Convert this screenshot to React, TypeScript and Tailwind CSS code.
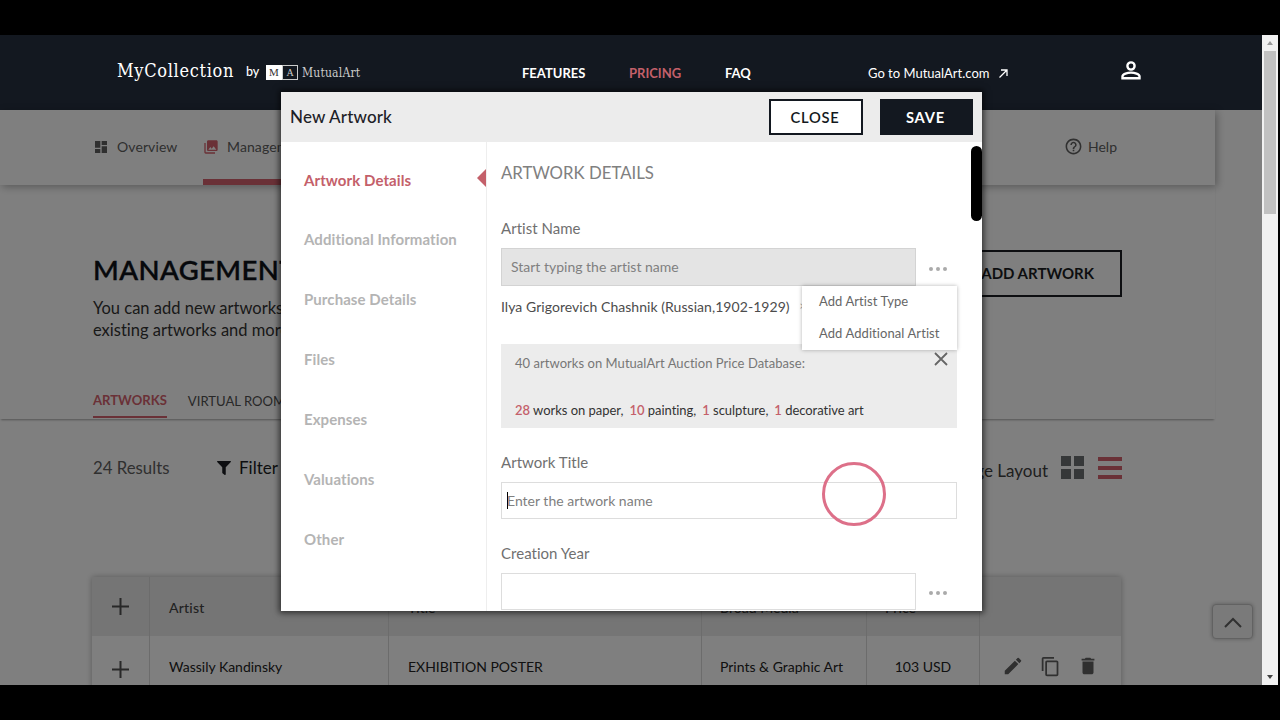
import { ReactNode } from "react";
import { FaFilter } from "react-icons/fa";
import {
  MdContentCopy,
  MdDashboard,
  MdDelete,
  MdEdit,
  MdHelpOutline,
  MdPhotoLibrary,
} from "react-icons/md";

const sections = [
  "Artwork Details",
  "Additional Information",
  "Purchase Details",
  "Files",
  "Expenses",
  "Valuations",
  "Other",
];

function Header() {
  return (
    <header className="flex h-[75px] shrink-0 items-center bg-[#131820] text-white">
      <div className="ml-[117px] flex w-[405px] items-center">
        <span className="w-[129px] whitespace-nowrap pb-1 font-['DejaVu_Serif_Condensed','DejaVu_Serif',serif] text-[18px] leading-6 tracking-[0.7px]">
          MyCollection
        </span>
        <span className="w-[20px] pb-0.5 text-[12.5px] font-medium leading-4">by</span>
        <span className="flex h-[15px] w-4 items-center justify-center bg-white font-['Liberation_Serif',serif] text-[11px] text-[#333]">
          M
        </span>
        <span className="flex h-[15px] w-4 items-center justify-center border border-[#ccc] font-['Liberation_Serif',serif] text-[10px] text-[#ccc]">
          A
        </span>
        <span className="ml-1 font-['DejaVu_Serif_Condensed','DejaVu_Serif',serif] text-[12px] leading-4 tracking-[0.2px] text-[#ccc]">
          MutualArt
        </span>
      </div>
      <nav className="flex w-[346px] text-[13px] font-bold leading-4">
        <span className="w-[107px]">FEATURES</span>
        <span className="w-[96px] text-[#c4606a]">PRICING</span>
        <span>FAQ</span>
      </nav>
      <div className="flex w-[253px] items-center text-[13px] leading-4">
        <span className="w-[131px] whitespace-nowrap">Go to MutualArt.com</span>
        <svg className="mt-0.5" width="9" height="9" viewBox="0 0 9 9" fill="none" stroke="currentColor" strokeWidth="1.3">
          <path d="M0.5 8.5 L8 1 M2 1 H8 V7" />
        </svg>
      </div>
      <svg className="-mt-1" width="20" height="19" viewBox="0 0 20 19" fill="none" stroke="currentColor" strokeWidth="2.4">
        <circle cx="10" cy="5" r="3.6" />
        <path d="M1.5 17.3 V15.2 C1.5 12.9 6.5 11.6 10 11.6 C13.5 11.6 18.5 12.9 18.5 15.2 V17.3 Z" />
      </svg>
    </header>
  );
}

function SubNav() {
  return (
    <div className="relative flex h-[75px] w-[1215px] shrink-0 bg-white pl-[93px] text-[14px] text-[#606060] shadow-[2px_2px_8px_rgba(0,0,0,0.3)]">
      <div className="flex w-[110px] items-center gap-2 pb-0.5 tracking-[0.1px]">
        <MdDashboard className="size-4" />
        Overview
      </div>
      <div className="flex w-[130px] items-center gap-2 border-b-[6px] border-[#d5636e] pt-1 tracking-[0.1px]">
        <MdPhotoLibrary className="size-4 text-[#d5636e]" />
        Management
      </div>
      <div className="ml-auto flex w-[151px] items-center gap-[5px] pb-0.5">
        <MdHelpOutline className="size-[19px]" />
        Help
      </div>
    </div>
  );
}

function ArtworkTable() {
  const line = "border-l border-[#d8d8d8]";
  return (
    <div className="ml-[92px] mt-[84px] w-[1029px] bg-white text-[14px] text-[#222] shadow-[0_0_6px_rgba(0,0,0,0.3)]">
      <div className="flex h-[59px] items-center bg-[#ebebeb] text-[#444] *:flex *:h-full *:items-center">
        <div className="w-[57px] justify-center"><Plus /></div>
        <div className={`w-[239px] pl-[19px] pt-px font-medium tracking-[0.2px] ${line}`}>Artist</div>
        <div className={`w-[313px] pl-[19px] pt-px font-medium ${line}`}>Title</div>
        <div className={`w-[165px] pl-[18px] pt-px font-medium ${line}`}>Broad Media</div>
        <div className={`w-[113px] pl-[18px] pt-px font-medium ${line}`}>Price</div>
        <div className={`w-[142px] ${line}`} />
      </div>
      <div className="flex h-[62px] items-center *:flex *:h-full *:items-center *:pb-0.5">
        <div className="w-[57px] justify-center pt-[7px]"><Plus /></div>
        <div className={`w-[239px] pl-[19px] ${line}`}>Wassily Kandinsky</div>
        <div className={`w-[313px] pl-[19px] ${line}`}>EXHIBITION POSTER</div>
        <div className={`w-[165px] pl-[18px] ${line}`}>Prints &amp; Graphic Art</div>
        <div className={`w-[113px] justify-center ${line}`}>103 USD</div>
        <div className={`w-[142px] gap-[17px] pl-[22px] text-[#606060] ${line}`}>
          <MdEdit className="size-[22px]" />
          <MdContentCopy className="-ml-px size-[21px]" />
          <MdDelete className="-ml-px size-[22px]" />
        </div>
      </div>
    </div>
  );
}

function Plus() {
  return (
    <svg width="17" height="17" viewBox="0 0 17 17" stroke="#505050" strokeWidth="2">
      <path d="M8.5 0 V17 M0 8.5 H17" />
    </svg>
  );
}

function Management() {
  return (
    <div className="text-[#1a1d22]">
      <div className="flex h-[234px] w-[1215px] items-start pl-[93px] shadow-[0_2px_2px_-1px_rgba(0,0,0,0.35)]">
        <div className="pt-[67px]">
          <h1 className="h-[45px] text-[27.5px] font-semibold leading-9 tracking-[0.4px] text-[#0e1218] [-webkit-text-stroke:0.3px]">
            MANAGEMENT
          </h1>
          <p className="whitespace-nowrap text-[16.5px] leading-[22px] text-[#333]">
            You can add new artworks,
            <br />
            existing artworks and more
          </p>
          <div className="mt-[50px] flex gap-[21px] text-[13.1px] leading-[18px] text-[#505050]">
            <span className="h-[27px] border-b-2 border-[#d5636e] font-bold text-[#d5636e]">ARTWORKS</span>
            <span className="pt-px">VIRTUAL ROOMS</span>
          </div>
        </div>
        <button className="ml-auto mr-[93px] mt-[65px] h-[47px] w-[190px] border-2 border-[#1a1d22] pr-[26px] text-right text-[15px] font-bold">
          ADD ARTWORK
        </button>
      </div>
      <div className="flex h-[74px] w-[1122px] items-end pl-[93px] text-[17px]">
        <div className="flex h-[38px] w-[124px] items-start text-[16.8px] text-[#606060]">24 Results</div>
        <div className="flex h-[38px] items-start gap-2">
          <FaFilter className="mt-[6px] size-[14px]" />
          <span>Filter</span>
        </div>
        <div className="ml-auto flex h-[38px] items-start text-[#404040]">
          <span className="mt-[3px] w-[150px] text-right">Change Layout</span>
          <div className="ml-[13px] mt-[1px] grid grid-cols-2 gap-[3px] *:size-[10px] *:bg-[#6c7073]">
            <i /><i /><i /><i />
          </div>
          <div className="ml-[14px] mt-[2px] flex w-6 flex-col gap-[5px] *:h-1 *:bg-[#d5636e]">
            <i /><i /><i />
          </div>
        </div>
      </div>
      <ArtworkTable />
    </div>
  );
}

function Dots() {
  return (
    <div className="flex gap-[3px] *:size-1 *:rounded-full *:bg-[#aaa]">
      <i /><i /><i />
    </div>
  );
}

function Label({ children }: { children: ReactNode }) {
  return <div className="text-[15px] leading-5 tracking-[0.03px] text-[#707070]">{children}</div>;
}

function ArtistMenu() {
  return (
    <div className="absolute left-[301px] top-[38px] h-[64px] w-[155px] whitespace-nowrap bg-white pl-[17px] text-[13px] tracking-[0.08px] text-[#666] shadow-[0_0_4px_rgba(0,0,0,0.3)]">
      <div className="flex h-8 items-center">Add Artist Type</div>
      <div className="flex h-8 items-center">Add Additional Artist</div>
    </div>
  );
}

function ArtworkForm() {
  return (
    <div className="w-[496px] pl-[14px] pt-5">
      <h2 className="text-[16.8px] leading-[22px] text-[#808080]">ARTWORK DETAILS</h2>
      <div className="mt-[34px]">
        <Label>Artist Name</Label>
      </div>
      <div className="relative mt-[10px] w-[456px]">
        <div className="flex items-center">
          <div className="flex h-[38px] w-[415px] items-center border border-[#d3d3d3] bg-[#e4e4e4] pb-px pl-[9px] text-[14px] text-[#808080]">
            Start typing the artist name
          </div>
          <div className="ml-[13px] mt-1">
            <Dots />
          </div>
        </div>
        <div className="mt-[10px] flex h-5 items-center text-[14px] tracking-[0.05px] text-[#4c4c4c]">
          Ilya Grigorevich Chashnik (Russian,1902-1929)
          <span className="ml-[10px] text-[12px] text-[#999]">×</span>
        </div>
        <div className="relative mt-[28px] h-[84px] bg-[#ececec] pl-[14px] text-[13px]">
          <div className="pt-[9px] leading-5 tracking-[0.04px] text-[#777]">
            40 artworks on MutualArt Auction Price Database:
          </div>
          <div className="mt-[27px] flex gap-[6px] whitespace-nowrap leading-5 tracking-[-0.03px] text-[#333] [&_b]:font-semibold [&_b]:text-[#c4606a]">
            <span><b>28</b> works on paper,</span>
            <span><b>10</b> painting,</span>
            <span><b>1</b> sculpture,</span>
            <span><b>1</b> decorative art</span>
          </div>
          <svg className="absolute right-[9px] top-[8px]" width="14" height="14" viewBox="0 0 14 14" stroke="#666" strokeWidth="1.8">
            <path d="M1 1 L13 13 M13 1 L1 13" />
          </svg>
        </div>
        <ArtistMenu />
      </div>
      <div className="mt-[24px]">
        <Label>Artwork Title</Label>
      </div>
      <div className="mt-[10px] flex h-[37px] w-[456px] items-center border border-[#ddd] pl-[5px] text-[14px] text-[#808080]">
        <span className="-mr-px h-[17px] w-px bg-black" />
        Enter the artwork name
      </div>
      <div className="mt-[24px]">
        <Label>Creation Year</Label>
      </div>
      <div className="mt-[10px] flex items-center">
        <div className="h-[37px] w-[415px] border border-[#ddd]" />
        <div className="ml-[13px] mt-[3px]">
          <Dots />
        </div>
      </div>
    </div>
  );
}

function NewArtworkModal() {
  return (
    <div className="absolute left-[281px] top-[57px] flex h-[519px] w-[701px] flex-col bg-white shadow-[0_0_6px_2px_rgba(0,0,0,0.6)]">
      <div className="flex h-[50px] shrink-0 items-center bg-[#ececec] pl-[9px] pr-[9px] text-[14.7px] font-bold tracking-[0.8px]">
        <span className="mr-auto text-[17px] font-medium tracking-[0.15px] text-[#1d2127]">New Artwork</span>
        <button className="h-9 w-[94px] border-2 border-[#131820] bg-white pr-0.5 font-semibold text-[#131820]">CLOSE</button>
        <button className="ml-[17px] h-9 w-[93px] bg-[#131820] pr-0.5 text-white">SAVE</button>
      </div>
      <div className="flex h-[469px] overflow-hidden">
        <nav className="w-[205px] pl-[23px] pt-2 text-[15px] font-bold tracking-[0.08px] text-[#b4b4b4]">
          {sections.map((name, i) =>
            i === 0 ? (
              <div key={name} className="flex h-[60px] items-center justify-between text-[#c4606a]">
                {name}
                <svg className="-mt-1" width="9" height="18" viewBox="0 0 9 18" fill="currentColor">
                  <path d="M9 0 V18 L0 9 Z" />
                </svg>
              </div>
            ) : (
              <div key={name} className="flex h-[60px] items-center pb-px">{name}</div>
            )
          )}
        </nav>
        <div className="relative flex w-[496px] border-l border-[#eee]">
          <ArtworkForm />
          <div className="absolute right-0 top-1 h-[75px] w-[11px] rounded-full bg-black" />
        </div>
      </div>
    </div>
  );
}

function PageScrollbar() {
  return (
    <div className="flex w-4 flex-col items-center bg-[#f1f1f1]">
      <svg className="my-1" width="6" height="8" viewBox="0 0 6 8">
        <path d="M3 2 L6 6 H0 Z" fill="#999" />
      </svg>
      <div className="h-[163px] w-3 bg-[#c1c1c1]" />
      <svg className="mb-1 mt-auto" width="6" height="8" viewBox="0 0 6 8">
        <path d="M3 6 L6 2 H0 Z" fill="#444" />
      </svg>
    </div>
  );
}

export default function App() {
  return (
    <div className="h-[720px] w-[1280px] overflow-hidden bg-black py-[35px] font-[Lato,sans-serif] [font-variant-ligatures:none]">
      <div className="relative flex h-[650px] overflow-hidden">
        <div className="relative flex h-[650px] w-[1262px] flex-col overflow-hidden bg-white">
          <Header />
          <SubNav />
          <Management />
          <button className="absolute bottom-[46px] right-[9px] flex h-[35px] w-[41px] items-center justify-center rounded-sm border border-[#c4c4c4] bg-[#f4f4f4] shadow-[0_0_4px_rgba(0,0,0,0.3)]">
            <svg className="mt-0.5" width="18" height="11" viewBox="0 0 18 11" fill="none" stroke="#606060" strokeWidth="2">
              <path d="M1 10 L9 2 L17 10" />
            </svg>
          </button>
          <div className="absolute inset-x-0 bottom-0 top-[75px] bg-black/50" />
        </div>
        <PageScrollbar />
        <NewArtworkModal />
        {/* click marker */}
        <div className="absolute left-[822px] top-[427px] size-16 rounded-full border-[3px] border-[#dd7089]" />
      </div>
    </div>
  );
}
